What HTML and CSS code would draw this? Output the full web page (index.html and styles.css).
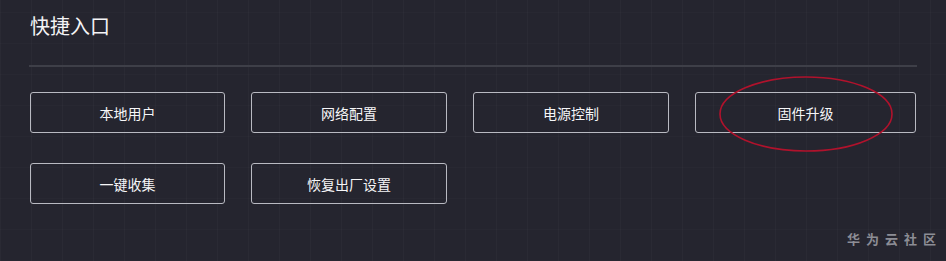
FILE: index.html
```html
<!DOCTYPE html>
<html lang="zh-CN">
<head>
<meta charset="utf-8">
<title>快捷入口</title>
<link rel="stylesheet" href="styles.css">
</head>
<body>
<div class="panel">
  <h2 class="title">快捷入口</h2>
  <div class="divider"></div>
  <div class="grid">
    <button class="btn">本地用户</button>
    <button class="btn">网络配置</button>
    <button class="btn">电源控制</button>
    <button class="btn">固件升级</button>
    <button class="btn">一键收集</button>
    <button class="btn">恢复出厂设置</button>
  </div>
  <svg class="mark" width="180" height="80" viewBox="0 0 180 80">
    <ellipse cx="90" cy="40" rx="86" ry="37" fill="none" stroke="#b0122c" stroke-width="1.6"/>
  </svg>
  <div class="watermark">华为云社区</div>
</div>
</body>
</html>
```
FILE: styles.css
```css
html, body {
  margin: 0;
  padding: 0;
}
body {
  width: 946px;
  height: 261px;
  overflow: hidden;
  background-color: #25252f;
  background-image:
    repeating-linear-gradient(90deg, rgba(255,255,255,0.025) 0 1px, transparent 1px 31px),
    repeating-linear-gradient(0deg, rgba(255,255,255,0.015) 0 1px, transparent 1px 31px);
  font-family: "Noto Sans CJK SC", "Noto Sans", sans-serif;
}
.panel {
  position: relative;
  height: 261px;
  padding: 0 29px 0 30px;
  box-sizing: border-box;
}
.title {
  margin: 0;
  padding-top: 12px;
  font-size: 20px;
  line-height: 28px;
  font-weight: 400;
  color: #f4f4f6;
}
.divider {
  margin-top: 25px;
  height: 2px;
  background: #3e3f48;
  margin-left: -1px;
}
.grid {
  margin-top: 25px;
  display: grid;
  grid-template-columns: 195px 196px 196px 221px;
  grid-auto-rows: 41px;
  column-gap: 26px;
  row-gap: 30px;
}
.btn {
  box-sizing: border-box;
  background: transparent;
  border: 1px solid #b9bac2;
  border-radius: 3px;
  color: #f6f6f8;
  font-family: "Noto Sans CJK SC", "Noto Sans", sans-serif;
  font-size: 14px;
  padding: 0;
  cursor: pointer;
}
.mark {
  position: absolute;
  left: 716px;
  top: 74px;
}
.watermark {
  position: absolute;
  right: 4px;
  top: 229px;
  font-size: 13px;
  letter-spacing: 6px;
  color: #8c8d95;
  font-weight: 700;
}
```
